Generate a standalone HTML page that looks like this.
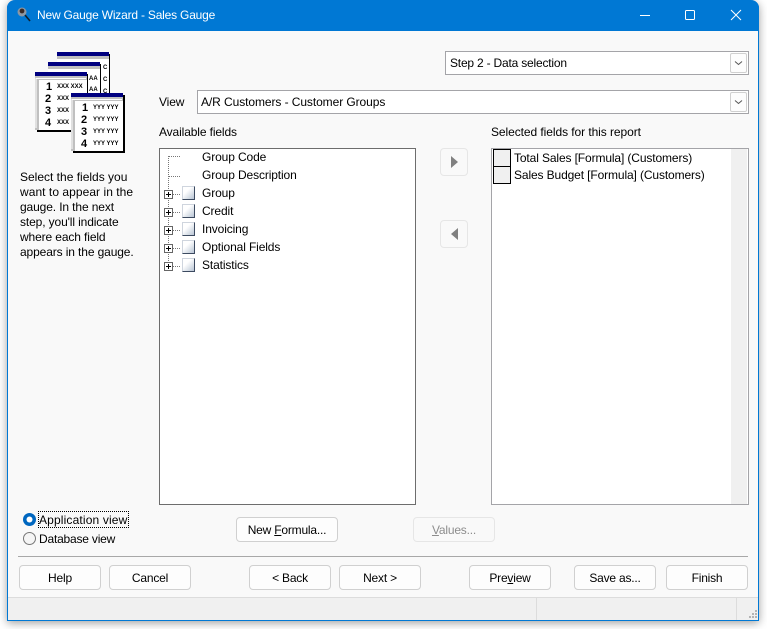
<!DOCTYPE html>
<html><head><meta charset="utf-8"><style>
html,body{margin:0;padding:0;width:767px;height:629px;overflow:hidden;background:#fff}
body{font:12px "Liberation Sans",sans-serif;color:#000;position:relative}
.a,.t,.b{position:absolute}
.t{white-space:nowrap;line-height:15px;height:15px;letter-spacing:-.12px}
.b{box-sizing:border-box;background:#fdfdfd;border:1px solid #d0d0d0;border-radius:4px;text-align:center;line-height:25px;height:25px;letter-spacing:-.2px}
.c{box-sizing:border-box;background:#fff;border:1px solid #a4a4a8;position:absolute}
.d{position:absolute;width:17px;height:20px;box-sizing:border-box;background:#fdfdfd;border:1px solid #d0d0d0;border-radius:2px}
.i{position:absolute;left:182px;width:13px;height:14px;box-sizing:border-box;background:linear-gradient(135deg,#fff 35%,#b8c4d4);border:1px solid #cfd5de;border-right-color:#3c4a60;border-bottom-color:#3c4a60}
u{text-decoration-thickness:1px}
</style></head><body>
<div class="a" style="left:7px;top:0;width:752px;height:621px;box-sizing:border-box;background:#f9f9f9;border:1px solid #0078d4;border-top:0;border-radius:8px 8px 0 0;box-shadow:0 2px 9px rgba(0,0,0,.38)"></div>
<div class="a" style="left:7px;top:0;width:752px;height:31px;background:#0078d4;border-radius:8px 8px 0 0"></div>
<svg class="a" style="left:15px;top:6px" width="18" height="18" viewBox="0 0 18 18"><circle cx="7" cy="6" r="4.5" fill="#8d97a3"/><circle cx="7" cy="5" r="2.4" fill="#3a2a25"/><path d="M10 9l5 6" stroke="#10202c" stroke-width="1.6"/></svg>
<div class="t" style="left:37px;top:8px;color:#fff;letter-spacing:-.2px">New Gauge Wizard - Sales Gauge</div>
<svg class="a" style="left:620px;top:0" width="139" height="31" fill="none" stroke="#fff"><path d="M20 15.5h10"/><rect x="65.5" y="10.5" width="9" height="9" rx="1"/><path d="M111 10l10 10M121 10l-10 10"/></svg>

<svg class="a" style="left:33px;top:50px" width="94" height="105" viewBox="33 50 94 105" shape-rendering="crispEdges">
<rect x="59" y="54" width="51" height="46" fill="#000"/><rect x="57" y="52" width="52" height="46" fill="#fff"/><rect x="57" y="52" width="52" height="4" fill="#000080"/><rect x="57" y="56" width="52" height="3" fill="#c0c0c0"/>
<rect x="50" y="64" width="51" height="46" fill="#000"/><rect x="48" y="62" width="52" height="46" fill="#fff"/><rect x="48" y="62" width="52" height="4" fill="#000080"/><rect x="48" y="66" width="52" height="3" fill="#c0c0c0"/>
<rect x="37" y="74" width="51" height="58" fill="#000"/><rect x="35" y="72" width="52" height="58" fill="#fff"/><rect x="35" y="72" width="52" height="4" fill="#000080"/><rect x="35" y="76" width="52" height="4" fill="#c0c0c0"/><rect x="35" y="76" width="4" height="54" fill="#c0c0c0"/><path d="M36 78.5h50M36 78v50" stroke="#fff" fill="none"/>
<rect x="73" y="95" width="52" height="58" fill="#000"/><rect x="71" y="93" width="52" height="58" fill="#fff"/><rect x="71" y="93" width="52" height="4" fill="#000080"/><rect x="71" y="97" width="52" height="4" fill="#c0c0c0"/><rect x="71" y="97" width="4" height="54" fill="#c0c0c0"/><path d="M72 99.5h50M72 99v50" stroke="#fff" fill="none"/>
<g font-family="Liberation Sans" font-size="11" font-weight="bold"><text x="46" y="90">1</text><text x="45" y="102">2</text><text x="45" y="114">3</text><text x="45" y="126">4</text><text x="82" y="111">1</text><text x="81" y="123">2</text><text x="81" y="135">3</text><text x="81" y="147">4</text></g>
<g font-family="Liberation Sans" font-size="6" font-weight="bold"><text x="57" y="88">XXX XXX</text><text x="57" y="100">XXX</text><text x="57" y="112">XXX</text><text x="57" y="124">XXX</text><text x="93" y="109">YYY YYY</text><text x="93" y="121">YYY YYY</text><text x="93" y="133">YYY YYY</text><text x="93" y="145">YYY YYY</text><text x="89" y="80">AA</text><text x="89" y="91">AA</text><text x="103" y="69">C</text><text x="103" y="81">C</text><text x="103" y="93">C</text></g>
</svg>

<div class="t" style="left:20px;top:170px;letter-spacing:0">Select the fields you</div>
<div class="t" style="left:20px;top:185px;letter-spacing:.05px">want to appear in the</div>
<div class="t" style="left:20px;top:200px">gauge. In the next</div>
<div class="t" style="left:20px;top:215px">step, you'll indicate</div>
<div class="t" style="left:20px;top:230px">where each field</div>
<div class="t" style="left:20px;top:245px">appears in the gauge.</div>

<div class="c" style="left:445px;top:51px;width:304px;height:24px"></div>
<div class="t" style="left:450px;top:56px;letter-spacing:-.2px">Step 2 - Data selection</div>
<div class="d" style="left:730px;top:53px"></div>
<div class="t" style="left:159px;top:95px">View</div>
<div class="c" style="left:197px;top:90px;width:552px;height:24px"></div>
<div class="t" style="left:201px;top:95px;letter-spacing:-.08px">A/R Customers - Customer Groups</div>
<div class="d" style="left:730px;top:92px"></div>
<svg class="a" style="left:730px;top:53px" width="17" height="60" fill="none" stroke="#555"><path d="M5 8.5l3.5 3 3.5-3M5 47.5l3.5 3 3.5-3"/></svg>

<div class="t" style="left:159px;top:125px">Available fields</div>
<div class="t" style="left:491px;top:125px;letter-spacing:-.07px">Selected fields for this report</div>

<div class="c" style="left:159px;top:148px;width:257px;height:357px;border-color:#6d6d6d"></div>
<svg class="a" style="left:160px;top:149px" width="40" height="125" fill="none" shape-rendering="crispEdges">
<path d="M8.5 7v110M9 7.5h12M9 27.5h12M13 45.5h8M13 63.5h8M13 81.5h8M13 99.5h8M13 117.5h8" stroke="#777" stroke-dasharray="1 1"/>
<g fill="#fff" stroke="#666"><rect x="4.5" y="41.5" width="8" height="8"/><rect x="4.5" y="59.5" width="8" height="8"/><rect x="4.5" y="77.5" width="8" height="8"/><rect x="4.5" y="95.5" width="8" height="8"/><rect x="4.5" y="113.5" width="8" height="8"/></g>
<path d="M6 45.5h5M8.5 43v5M6 63.5h5M8.5 61v5M6 81.5h5M8.5 79v5M6 99.5h5M8.5 97v5M6 117.5h5M8.5 115v5" stroke="#000"/>
</svg>
<div class="i" style="top:186px"></div>
<div class="i" style="top:204px"></div>
<div class="i" style="top:222px"></div>
<div class="i" style="top:240px"></div>
<div class="i" style="top:258px"></div>
<div class="t" style="left:202px;top:150px">Group Code</div>
<div class="t" style="left:202px;top:168px">Group Description</div>
<div class="t" style="left:202px;top:186px">Group</div>
<div class="t" style="left:202px;top:204px">Credit</div>
<div class="t" style="left:202px;top:222px">Invoicing</div>
<div class="t" style="left:202px;top:240px">Optional Fields</div>
<div class="t" style="left:202px;top:258px">Statistics</div>

<div class="b" style="left:440px;top:148px;width:28px;height:28px;border-color:#e6e6e6;background:#f9f9f9"></div>
<div class="b" style="left:440px;top:220px;width:28px;height:28px;border-color:#e6e6e6;background:#f9f9f9"></div>
<svg class="a" style="left:440px;top:148px" width="28" height="100" fill="#808080"><path d="M11 8l7 6-7 6zM18 80l-7 6 7 6z"/></svg>

<div class="c" style="left:491px;top:148px;width:258px;height:357px"></div>
<div class="a" style="left:731px;top:149px;width:16px;height:355px;background:#f0f0f0"></div>
<div class="a" style="left:493px;top:149px;width:18px;height:18px;box-sizing:border-box;background:#f0f0f0;border:1px solid #000"></div>
<div class="a" style="left:493px;top:166px;width:18px;height:18px;box-sizing:border-box;background:#f0f0f0;border:1px solid #000"></div>
<div class="t" style="left:514px;top:151px">Total Sales [Formula] (Customers)</div>
<div class="t" style="left:514px;top:168px">Sales Budget [Formula] (Customers)</div>

<svg class="a" style="left:23px;top:513px" width="14" height="33"><circle cx="6.5" cy="6.5" r="6.5" fill="#0067c0"/><circle cx="6.5" cy="6.5" r="3" fill="#fff"/><circle cx="6.5" cy="25.5" r="6" fill="#f5f5f5" stroke="#777"/></svg>
<div class="t" style="left:38px;top:511px;width:90px;height:17px;line-height:18px;outline:1px dotted #000;outline-offset:-1px;padding-left:1px;letter-spacing:.15px">Application view</div>
<div class="t" style="left:39px;top:532px;letter-spacing:-.2px">Database view</div>

<div class="b" style="left:236px;top:517px;width:102px">New <u>F</u>ormula...</div>
<div class="b" style="left:413px;top:517px;width:82px;color:#8d8d8d;background:#f9f9f9;border-color:#e6e6e6"><u>V</u>alues...</div>
<div class="a" style="left:18px;top:556px;width:730px;height:1px;background:#a8a8a8"></div>
<div class="b" style="left:19px;top:565px;width:82px">Help</div>
<div class="b" style="left:109px;top:565px;width:82px">Cancel</div>
<div class="b" style="left:249px;top:565px;width:82px">&lt; Back</div>
<div class="b" style="left:339px;top:565px;width:82px">Next &gt;</div>
<div class="b" style="left:469px;top:565px;width:82px">Pre<u>v</u>iew</div>
<div class="b" style="left:574px;top:565px;width:82px">Save as...</div>
<div class="b" style="left:666px;top:565px;width:82px">Finish</div>

<div class="a" style="left:8px;top:597px;width:750px;height:23px;background:#f0f0f0;border-top:1px solid #dcdcdc;box-sizing:border-box"></div>
<div class="a" style="left:536px;top:598px;width:1px;height:22px;background:#dcdcdc"></div>
<div class="a" style="left:736px;top:598px;width:1px;height:22px;background:#dcdcdc"></div>
<svg class="a" style="left:748px;top:609px" width="10" height="10" fill="#b4b4b4" shape-rendering="crispEdges"><rect x="7" y="1" width="2" height="2"/><rect x="4" y="4" width="2" height="2"/><rect x="7" y="4" width="2" height="2"/><rect x="1" y="7" width="2" height="2"/><rect x="4" y="7" width="2" height="2"/><rect x="7" y="7" width="2" height="2"/></svg>
</body></html>
